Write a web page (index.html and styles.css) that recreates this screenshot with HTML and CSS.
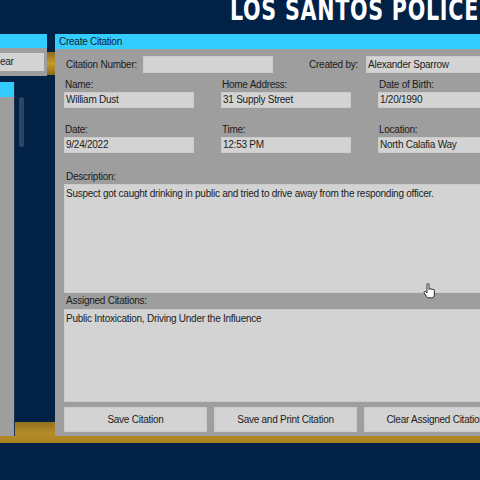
FILE: index.html
```html
<!DOCTYPE html>
<html lang="en">
<head>
    <meta charset="UTF-8">
    <title>Create Citation</title>
    <link rel="stylesheet" href="styles.css">
</head>
<body>
<div class="title"><span>LOS SANTOS POLICE</span></div>
<div class="desk">
    <div class="side">
        <div class="mini">
            <div class="bar"></div>
            <div class="mini-body">
                <div class="mini-btn">Clear</div>
            </div>
        </div>
        <div class="list">
            <div class="list-panel">
                <div class="bar"></div>
                <div class="list-body"></div>
            </div>
            <div class="track"><div class="thumb"></div></div>
        </div>
    </div>
    <div class="main">
        <div class="bar">Create Citation</div>
        <div class="form">
            <div class="row-top">
                <label class="lbl-num">Citation Number:</label>
                <div class="box"></div>
                <label class="lbl-by">Created by:</label>
                <div class="box">Alexander Sparrow</div>
            </div>
            <div class="grid">
                <div class="field"><label>Name:</label><div class="box">William Dust</div></div>
                <div class="field"><label>Home Address:</label><div class="box">31 Supply Street</div></div>
                <div class="field"><label>Date of Birth:</label><div class="box">1/20/1990</div></div>
                <div class="field"><label>Date:</label><div class="box">9/24/2022</div></div>
                <div class="field"><label>Time:</label><div class="box">12:53 PM</div></div>
                <div class="field"><label>Location:</label><div class="box">North Calafia Way</div></div>
            </div>
            <label class="lbl-desc">Description:</label>
            <div class="area area-desc">Suspect got caught drinking in public and tried to drive away from the responding officer.</div>
            <label class="lbl-assigned">Assigned Citations:</label>
            <div class="area area-assigned">Public Intoxication, Driving Under the Influence</div>
            <div class="buttons">
                <button>Save Citation</button>
                <button>Save and Print Citation</button>
                <button>Clear Assigned Citation</button>
            </div>
        </div>
    </div>
</div>
<svg class="cursor" width="12" height="16" viewBox="0 0 12 16">
    <path d="M4 1.6a1 1 0 0 1 2 0V6.4l.2-.4a1 1 0 0 1 1.7.4l.2-.2a1 1 0 0 1 1.6.5l.2-.1a1 1 0 0 1 1.5.7V11c0 2.3-1 3.8-2.8 3.8H5.6c-.9 0-1.5-.4-2-1.2L1.2 10a1 1 0 0 1 1.5-1.3L4 10z" fill="#fff" stroke="#000" stroke-width=".8" stroke-linejoin="round"/>
</svg>
</body>
</html>
```

FILE: styles.css
```css
*{
    margin:0;
    padding:0;
    box-sizing: border-box;
}
html, body{
    width: 480px;
    height: 480px;
    overflow: hidden;
}
body{
    background: #022147;
    font-family: "Liberation Sans", Arial, sans-serif;
    font-size: 10px;
    letter-spacing: -0.25px;
    color: #1c1c1c;
    position: relative;
}
.title{
    height: 34px;
    padding-left: 230px;
    white-space: nowrap;
}
.title span{
    display: inline-block;
    font-family: "DejaVu Sans Condensed", "DejaVu Sans", sans-serif;
    font-weight: bold;
    font-size: 31px;
    line-height: 26px;
    letter-spacing: 1px;
    color: #ffffff;
    transform: scaleX(0.74);
    transform-origin: left top;
    margin-top: -4px;
}
.desk{
    display: flex;
    align-items: flex-start;
    height: 409px;
    background:
        linear-gradient(#8e6b1c, #c49b2d 50%, #8e6b1c) 0 18px / 100% 23px no-repeat,
        linear-gradient(#94711e, #b58d27 55%, #a98122) 0 388px / 100% 21px no-repeat;
}
.bar{
    height: 15px;
    line-height: 15px;
    background: #33ccff;
    padding-left: 4px;
    color: #10222e;
    white-space: nowrap;
}
.side{
    width: 55px;
    flex-shrink: 0;
}
.mini{
    width: 47px;
    height: 42px;
    background: #9e9e9e;
}
.mini .bar{
    height: 14px;
}
.mini-body{
    padding: 5px 3px 0 0;
}
.mini-btn{
    height: 18px;
    line-height: 18px;
    background: #d3d3d3;
    text-indent: -9px;
    overflow: hidden;
    white-space: nowrap;
}
.list{
    display: flex;
    margin-top: 6px;
    height: 354px;
}
.list-panel{
    width: 15px;
    background: #9e9e9e;
    border-right: 1px solid #1a3150;
}
.track{
    flex: 1;
    padding-left: 4px;
}
.thumb{
    width: 5px;
    height: 50px;
    margin-top: 15px;
    background: #2c4563;
    border-radius: 3px;
}
.main{
    width: 462px;
    height: 402px;
    flex-shrink: 0;
    background: #9e9e9e;
}
.form{
    padding: 0 9px;
}
.box{
    background: #d3d3d3;
    border: 1px solid #cbcbcb;
    padding-left: 1px;
    white-space: nowrap;
    overflow: hidden;
}
label{
    display: block;
    white-space: nowrap;
}
.row-top{
    display: flex;
    align-items: center;
    margin-top: 7px;
    height: 17px;
}
.row-top .box{
    width: 130px;
    height: 17px;
    line-height: 15px;
}
.lbl-num{
    width: 79px;
    padding-left: 2px;
}
.lbl-by{
    width: 93px;
    text-align: right;
    padding-right: 8px;
}
.grid{
    display: grid;
    grid-template-columns: repeat(3, 130px);
    column-gap: 27px;
    row-gap: 15px;
    margin-top: 5px;
}
.field label{
    height: 14px;
    line-height: 14px;
    padding-left: 1px;
}
.field .box{
    height: 16px;
    line-height: 14px;
}
.lbl-desc{
    margin-top: 17px;
    height: 14px;
    line-height: 14px;
    padding-left: 2px;
}
.area{
    background: #d3d3d3;
    border: 1px solid #cbcbcb;
    padding: 2px 1px;
    line-height: 13px;
    white-space: nowrap;
    overflow: hidden;
}
.area-desc{
    height: 109px;
}
.lbl-assigned{
    height: 16px;
    line-height: 16px;
    padding-left: 2px;
}
.area-assigned{
    height: 93px;
}
.buttons{
    display: flex;
    gap: 7px;
    margin-top: 5px;
}
.buttons button{
    width: 143px;
    height: 25px;
    flex-shrink: 0;
    background: #d3d3d3;
    border: 1px solid #cbcbcb;
    font: inherit;
    letter-spacing: inherit;
    color: #1c1c1c;
    white-space: nowrap;
}
.cursor{
    position: absolute;
    left: 423px;
    top: 283px;
}
```
